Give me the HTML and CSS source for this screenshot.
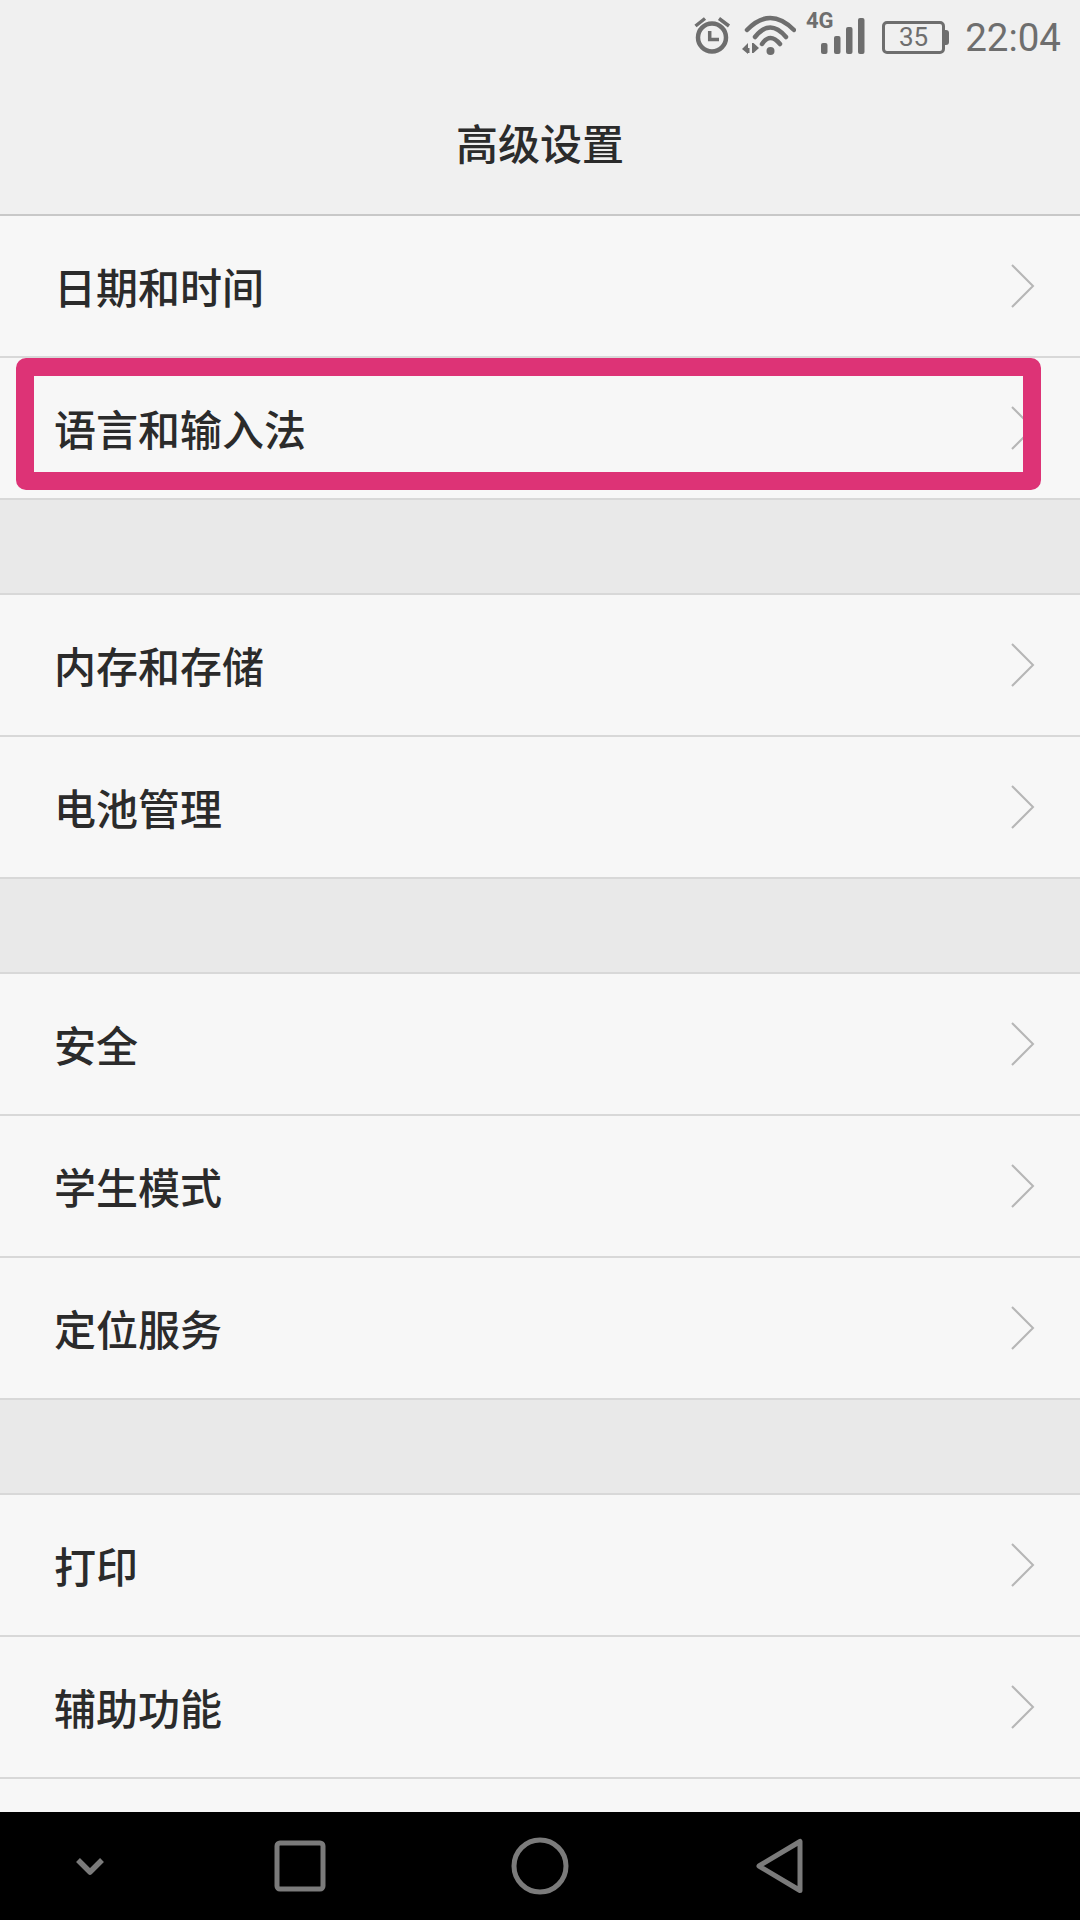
FILE: index.html
```html
<!DOCTYPE html>
<html lang="zh">

<head>
    <meta charset="utf-8">
    <title>高级设置</title>
    <link rel="stylesheet" href="styles.css">
</head>

<body>
    <div class="screen">
        <div class="statusbar">
            <svg class="ic-alarm" width="38" height="40" viewBox="0 0 38 40">
                <circle cx="18" cy="22.5" r="14" fill="none" stroke="#6e6e6e" stroke-width="4.500" />
                <path d="M15.7 16V24.5H25" fill="none" stroke="#6e6e6e" stroke-width="3.5" />
                <path d="M1.5 11L11 3.5M25 3.5L35 11" fill="none" stroke="#6e6e6e" stroke-width="3.5" />
            </svg>
            <svg class="ic-wifi" width="54" height="42" viewBox="0 0 54 42">
                <path d="M5 15Q28 -9 52 15" fill="none" stroke="#6e6e6e" stroke-width="4.500" stroke-linecap="round" />
                <path d="M13 22Q28 3 44 22" fill="none" stroke="#6e6e6e" stroke-width="4.500" stroke-linecap="round" />
                <path d="M20 29Q28 17 38 29" fill="none" stroke="#6e6e6e" stroke-width="4.500" stroke-linecap="round" />
                <circle cx="28.500" cy="36" r="4" fill="#6e6e6e" />
                <path d="M0 34L6 28V33H7.500V38H6V39ZM10 28H11.500L17 33L11.500 38H10Z" fill="#6e6e6e" />
            </svg>
            <svg class="ic-signal" width="59" height="54" viewBox="0 0 59 54">
                <text x="0" y="26" class="net-label">4G</text>
                <rect x="15" y="41" width="6.500" height="11" rx="2" fill="#6e6e6e" />
                <rect x="28" y="34" width="6.500" height="18" rx="2" fill="#6e6e6e" />
                <rect x="40" y="25" width="6.500" height="27" rx="2" fill="#6e6e6e" />
                <rect x="52" y="16" width="6.500" height="36" rx="2" fill="#6e6e6e" />
            </svg>
            <div class="battery">
                <div class="battery-body">35</div>
                <div class="battery-cap"></div>
            </div>
            <div class="clock">22:04</div>
        </div>

        <div class="titlebar">
            <h1 class="title">高级设置</h1>
        </div>

        <div class="row">
            <span class="row-text">日期和时间</span>
            <svg class="chevron" width="24" height="44" viewBox="0 0 24 44"><path d="M1 1L22 22L1 43" /></svg>
        </div>
        <div class="row">
            <span class="row-text">语言和输入法</span>
            <svg class="chevron" width="24" height="44" viewBox="0 0 24 44"><path d="M1 1L22 22L1 43" /></svg>
            <div class="highlight"></div>
        </div>
        <div class="gap"></div>

        <div class="row">
            <span class="row-text">内存和存储</span>
            <svg class="chevron" width="24" height="44" viewBox="0 0 24 44"><path d="M1 1L22 22L1 43" /></svg>
        </div>
        <div class="row">
            <span class="row-text">电池管理</span>
            <svg class="chevron" width="24" height="44" viewBox="0 0 24 44"><path d="M1 1L22 22L1 43" /></svg>
        </div>
        <div class="gap"></div>

        <div class="row">
            <span class="row-text">安全</span>
            <svg class="chevron" width="24" height="44" viewBox="0 0 24 44"><path d="M1 1L22 22L1 43" /></svg>
        </div>
        <div class="row">
            <span class="row-text">学生模式</span>
            <svg class="chevron" width="24" height="44" viewBox="0 0 24 44"><path d="M1 1L22 22L1 43" /></svg>
        </div>
        <div class="row">
            <span class="row-text">定位服务</span>
            <svg class="chevron" width="24" height="44" viewBox="0 0 24 44"><path d="M1 1L22 22L1 43" /></svg>
        </div>
        <div class="gap"></div>

        <div class="row">
            <span class="row-text">打印</span>
            <svg class="chevron" width="24" height="44" viewBox="0 0 24 44"><path d="M1 1L22 22L1 43" /></svg>
        </div>
        <div class="row">
            <span class="row-text">辅助功能</span>
            <svg class="chevron" width="24" height="44" viewBox="0 0 24 44"><path d="M1 1L22 22L1 43" /></svg>
        </div>
        <div class="filler"></div>

        <div class="navbar">
            <svg width="30" height="18" viewBox="0 0 30 18">
                <path d="M3 3L15 15L27 3" fill="none" stroke="#7b7b7b" stroke-width="5.500" stroke-linejoin="round" />
            </svg>
            <svg width="52" height="52" viewBox="0 0 52 52">
                <rect x="3" y="3" width="46" height="46" rx="3" fill="none" stroke="#7b7b7b" stroke-width="5" />
            </svg>
            <svg width="58" height="58" viewBox="0 0 58 58">
                <circle cx="29" cy="29" r="26" fill="none" stroke="#7b7b7b" stroke-width="5" />
            </svg>
            <svg width="48" height="56" viewBox="0 0 48 56">
                <path d="M44 3.500V52.500L3 28Z" fill="none" stroke="#7b7b7b" stroke-width="5" stroke-linejoin="round" />
            </svg>
        </div>
    </div>
</body>

</html>
```

FILE: styles.css
```css
* {
    box-sizing: border-box;
}

body {
    margin: 0;
    font-family: "Noto Sans CJK SC", "Liberation Sans", sans-serif;
}

.screen {
    width: 1080px;
    height: 1920px;
    display: flex;
    flex-direction: column;
    background: #f7f7f7;
}

.statusbar {
    height: 70px;
    display: flex;
    align-items: flex-start;
    padding-right: 19px;
    justify-content: flex-end;
    background: #f0f0f0;
    font-family: Roboto, sans-serif;
    color: #6e6e6e;
}

.ic-alarm {
    margin-top: 15px;
    margin-right: 10px;
}

.ic-wifi {
    margin-top: 15px;
    margin-right: 10px;
}

.ic-signal {
    margin-top: 2px;
    margin-right: 17px;
}

.net-label {
    font-family: Roboto, sans-serif;
    font-size: 22px;
    font-weight: 700;
    fill: #6e6e6e;
}

.battery {
    display: flex;
    align-items: center;
    margin-top: 21px;
    margin-right: 16px;
}

.battery-body {
    width: 63px;
    height: 33px;
    border: 3px solid #6e6e6e;
    border-radius: 5px;
    font-size: 26px;
    line-height: 27px;
    text-align: center;
}

.battery-cap {
    width: 4px;
    height: 15px;
    background: #6e6e6e;
    border-radius: 0 3px 3px 0;
}

.clock {
    margin-top: 15px;
    font-size: 38.5px;
    line-height: 45px;
}

.titlebar {
    height: 146px;
    padding-bottom: 2px;
    display: flex;
    align-items: center;
    justify-content: center;
    background: #f0f0f0;
    border-bottom: 2px solid #c8c8c8;
}

.title {
    margin: 0;
    font-size: 42px;
    font-weight: 500;
    color: #2b2b2b;
}

.row {
    position: relative;
    height: 142px;
    display: flex;
    align-items: center;
    justify-content: space-between;
    padding-left: 54px;
    padding-right: 45px;
    padding-bottom: 2px;
    border-bottom: 2px solid #d8d8d8;
}

.row-text {
    font-size: 42px;
    font-weight: 500;
    color: #2b2b2b;
}

.chevron {
    margin-bottom: -2px;
}

.chevron path {
    fill: none;
    stroke: #b6b6b6;
    stroke-width: 2;
}

/* pink box drawn over the second row */
.highlight {
    position: absolute;
    left: 16px;
    top: 0;
    width: 1025px;
    height: 132px;
    border: 18px solid #dd3376;
    border-radius: 10px;
}

.gap {
    height: 95px;
    background: #e9e9e9;
    border-bottom: 2px solid #d8d8d8;
}

.filler {
    flex: 1;
}

.navbar {
    height: 108px;
    display: grid;
    grid-template-columns: 180px 240px 240px 240px;
    justify-items: center;
    align-items: center;
    background: #000;
}
```
